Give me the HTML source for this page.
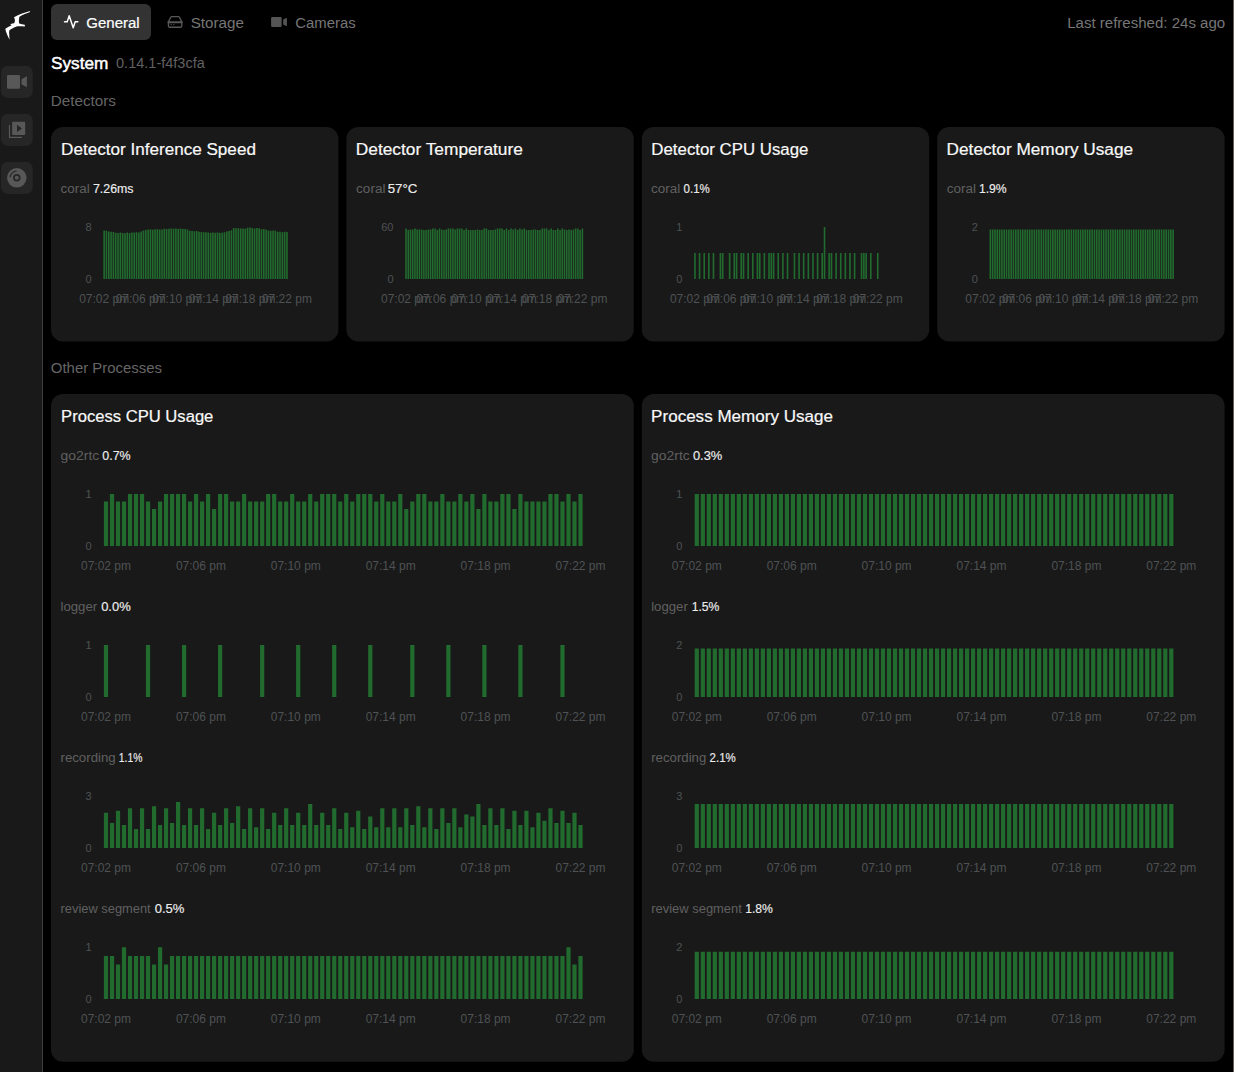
<!DOCTYPE html>
<html><head><meta charset="utf-8"><title>System</title>
<style>
html,body{margin:0;padding:0;background:#000;width:1234px;height:1072px;overflow:hidden}
svg{display:block;font-family:"Liberation Sans", sans-serif}
</style></head>
<body><svg width="1234" height="1072" viewBox="0 0 1234 1072">
<rect x="0" y="0" width="42" height="1072" fill="#191919"/>
<rect x="42" y="0" width="1" height="1072" fill="#3d3d3d"/>
<rect x="1233" y="0" width="1" height="1072" fill="#675e5a"/>
<path d="M9.6 39.8 C7.5 36 5.6 31.5 5.3 28.8 C7.5 27.2 9.8 26 11.6 25.2 L10.2 24.2 C11.8 23.6 13 23.4 14.2 23.2 C15 21.5 15.4 19.5 14 17.2 C19 14.5 25 12.4 30.2 11 L29.6 12.2 C26 13.5 22 15 19.4 16.8 C19 19 18.6 21.5 19.2 23.6 C21 24.2 23 24.4 24.8 24.8 L24.9 26.6 C21.5 26.4 19 26.2 16.6 26.4 C14 27.2 11.5 28.6 9.2 30.4 C9 33.5 9.4 36.5 9.6 39.8 Z" fill="#ffffff"/>
<rect x="1" y="65.8" width="31.8" height="32.2" rx="7" fill="#262626"/>
<rect x="1" y="113.8" width="31.8" height="32.2" rx="7" fill="#262626"/>
<rect x="1" y="161.8" width="31.8" height="32.2" rx="7" fill="#262626"/>
<rect x="7" y="74.9" width="13" height="13.9" rx="1.3" fill="#585858"/>
<path d="M21.5 79.3 L26.4 76.4 Q26.9 76.2 26.9 76.8 L26.9 86.8 Q26.9 87.4 26.4 87.1 L21.5 84.3 Z" fill="#585858"/>
<path d="M8.9 124.9 h1.2 v11.9 h11.9 v1.2 h-13.1 Z" fill="#585858"/>
<rect x="12.1" y="121.7" width="13.1" height="13.3" rx="1.2" fill="#585858"/>
<path d="M17 124.8 L22 128.4 L17 132 Z" fill="#262626"/>
<circle cx="16.8" cy="177.8" r="9.75" fill="#585858"/>
<circle cx="16.8" cy="177.8" r="2.9" fill="none" stroke="#262626" stroke-width="1.7"/>
<path d="M10.2 177.3 A 6.8 6.8 0 0 1 16.6 171" fill="none" stroke="#262626" stroke-width="1.2"/>
<rect x="51" y="4" width="100" height="36" rx="6" fill="#333333"/>
<g transform="translate(63.2,13.8) scale(0.6666666666666666)" fill="none" stroke="#ffffff" stroke-width="2.2" stroke-linecap="round" stroke-linejoin="round"><path d="M22 12h-4l-3 9L9 3l-3 9H2"/></g>
<text x="86.39" y="28.00" font-size="14" fill="#ffffff" font-weight="normal" textLength="53.29" lengthAdjust="spacingAndGlyphs" stroke="#ffffff" stroke-width="0.2">General</text>
<g transform="translate(167.1,13.9) scale(0.6666666666666666)" fill="none" stroke="#585858" stroke-width="2" stroke-linecap="round" stroke-linejoin="round"><line x1="22" x2="2" y1="12.4" y2="12.4" stroke-width="3"/><path d="M5.45 5.11 2 12v6a2 2 0 0 0 2 2h16a2 2 0 0 0 2-2v-6l-3.45-6.89A2 2 0 0 0 16.76 4H7.24a2 2 0 0 0-1.79 1.11z"/><line x1="6" x2="6.01" y1="16" y2="16"/><line x1="10" x2="10.01" y1="16" y2="16"/></g>
<text x="190.65" y="27.90" font-size="14" fill="#767676" font-weight="normal" textLength="53.22" lengthAdjust="spacingAndGlyphs">Storage</text>
<rect x="271.1" y="17.1" width="10.5" height="9.9" rx="1" fill="#555555"/>
<path d="M283.2 19.4 L286.4 17.9 Q286.9 17.7 286.9 18.3 L286.9 25.7 Q286.9 26.3 286.4 26.0 L283.2 24.6 Z" fill="#555555"/>
<text x="295.28" y="27.90" font-size="14" fill="#767676" font-weight="normal" textLength="60.32" lengthAdjust="spacingAndGlyphs">Cameras</text>
<text x="1067.21" y="27.90" font-size="14" fill="#767676" font-weight="normal" textLength="157.97" lengthAdjust="spacingAndGlyphs">Last refreshed: 24s ago</text>
<text x="51.08" y="68.80" font-size="16" fill="#ffffff" font-weight="normal" textLength="57.23" lengthAdjust="spacingAndGlyphs" stroke="#ffffff" stroke-width="0.45">System</text>
<text x="116.06" y="67.80" font-size="14" fill="#606060" font-weight="normal" textLength="88.76" lengthAdjust="spacingAndGlyphs">0.14.1-f4f3cfa</text>
<text x="50.69" y="105.80" font-size="14" fill="#666666" font-weight="normal" textLength="65.26" lengthAdjust="spacingAndGlyphs">Detectors</text>
<text x="50.84" y="372.70" font-size="14" fill="#666666" font-weight="normal" textLength="111.17" lengthAdjust="spacingAndGlyphs">Other Processes</text>
<rect x="51.00" y="127.00" width="287.40" height="214.60" rx="12" fill="#191919"/>
<text x="61.05" y="154.80" font-size="16" fill="#f8f8f8" font-weight="normal" textLength="194.86" lengthAdjust="spacingAndGlyphs" stroke="#f8f8f8" stroke-width="0.2">Detector Inference Speed</text>
<text x="60.56" y="192.90" font-size="12" fill="#606060" font-weight="normal" textLength="29.17" lengthAdjust="spacingAndGlyphs">coral</text>
<text x="92.92" y="192.90" font-size="12" fill="#ececec" font-weight="normal" textLength="40.64" lengthAdjust="spacingAndGlyphs" stroke="#ececec" stroke-width="0.15">7.26ms</text>
<path d="M103.35 230.62h1.62V279.00h-1.62Z M105.66 230.87h1.62V279.00h-1.62Z M107.97 231.51h1.62V279.00h-1.62Z M110.29 231.82h1.62V279.00h-1.62Z M112.60 232.10h1.62V279.00h-1.62Z M114.92 232.72h1.62V279.00h-1.62Z M117.23 232.93h1.62V279.00h-1.62Z M119.54 232.44h1.62V279.00h-1.62Z M121.86 233.08h1.62V279.00h-1.62Z M124.17 233.27h1.62V279.00h-1.62Z M126.48 232.60h1.62V279.00h-1.62Z M128.80 232.89h1.62V279.00h-1.62Z M131.11 232.46h1.62V279.00h-1.62Z M133.43 232.61h1.62V279.00h-1.62Z M135.74 232.34h1.62V279.00h-1.62Z M138.05 232.60h1.62V279.00h-1.62Z M140.37 231.50h1.62V279.00h-1.62Z M142.68 230.51h1.62V279.00h-1.62Z M144.99 229.99h1.62V279.00h-1.62Z M147.31 229.38h1.62V279.00h-1.62Z M149.62 229.37h1.62V279.00h-1.62Z M151.94 229.80h1.62V279.00h-1.62Z M154.25 229.19h1.62V279.00h-1.62Z M156.56 229.26h1.62V279.00h-1.62Z M158.88 229.43h1.62V279.00h-1.62Z M161.19 229.59h1.62V279.00h-1.62Z M163.50 228.84h1.62V279.00h-1.62Z M165.82 229.05h1.62V279.00h-1.62Z M168.13 228.76h1.62V279.00h-1.62Z M170.45 228.54h1.62V279.00h-1.62Z M172.76 228.63h1.62V279.00h-1.62Z M175.07 228.46h1.62V279.00h-1.62Z M177.39 228.88h1.62V279.00h-1.62Z M179.70 228.56h1.62V279.00h-1.62Z M182.01 229.01h1.62V279.00h-1.62Z M184.33 229.07h1.62V279.00h-1.62Z M186.64 229.57h1.62V279.00h-1.62Z M188.96 230.65h1.62V279.00h-1.62Z M191.27 231.05h1.62V279.00h-1.62Z M193.58 231.32h1.62V279.00h-1.62Z M195.90 231.05h1.62V279.00h-1.62Z M198.21 231.80h1.62V279.00h-1.62Z M200.52 231.98h1.62V279.00h-1.62Z M202.84 232.36h1.62V279.00h-1.62Z M205.15 232.29h1.62V279.00h-1.62Z M207.47 232.49h1.62V279.00h-1.62Z M209.78 232.63h1.62V279.00h-1.62Z M212.09 232.54h1.62V279.00h-1.62Z M214.41 232.65h1.62V279.00h-1.62Z M216.72 232.51h1.62V279.00h-1.62Z M219.03 232.80h1.62V279.00h-1.62Z M221.35 232.72h1.62V279.00h-1.62Z M223.66 232.30h1.62V279.00h-1.62Z M225.98 231.48h1.62V279.00h-1.62Z M228.29 231.01h1.62V279.00h-1.62Z M230.60 230.27h1.62V279.00h-1.62Z M232.92 228.12h1.62V279.00h-1.62Z M235.23 228.13h1.62V279.00h-1.62Z M237.54 228.26h1.62V279.00h-1.62Z M239.86 228.61h1.62V279.00h-1.62Z M242.17 228.58h1.62V279.00h-1.62Z M244.49 228.81h1.62V279.00h-1.62Z M246.80 227.82h1.62V279.00h-1.62Z M249.11 227.54h1.62V279.00h-1.62Z M251.43 228.00h1.62V279.00h-1.62Z M253.74 228.41h1.62V279.00h-1.62Z M256.05 228.01h1.62V279.00h-1.62Z M258.37 228.21h1.62V279.00h-1.62Z M260.68 229.32h1.62V279.00h-1.62Z M263.00 229.12h1.62V279.00h-1.62Z M265.31 229.82h1.62V279.00h-1.62Z M267.62 230.40h1.62V279.00h-1.62Z M269.94 230.64h1.62V279.00h-1.62Z M272.25 230.60h1.62V279.00h-1.62Z M274.56 230.85h1.62V279.00h-1.62Z M276.88 231.85h1.62V279.00h-1.62Z M279.19 231.63h1.62V279.00h-1.62Z M281.51 232.14h1.62V279.00h-1.62Z M283.82 231.65h1.62V279.00h-1.62Z M286.13 232.01h1.62V279.00h-1.62Z" fill="#216b2e"/>
<text x="91.60" y="231.10" font-size="11" fill="#4e5254" text-anchor="end">8</text>
<text x="91.60" y="282.90" font-size="11" fill="#4e5254" text-anchor="end">0</text>
<text x="104.16" y="302.80" font-size="12" fill="#4e5254" text-anchor="middle">07:02 pm</text>
<text x="140.71" y="302.80" font-size="12" fill="#4e5254" text-anchor="middle">07:06 pm</text>
<text x="177.27" y="302.80" font-size="12" fill="#4e5254" text-anchor="middle">07:10 pm</text>
<text x="213.83" y="302.80" font-size="12" fill="#4e5254" text-anchor="middle">07:14 pm</text>
<text x="250.39" y="302.80" font-size="12" fill="#4e5254" text-anchor="middle">07:18 pm</text>
<text x="286.94" y="302.80" font-size="12" fill="#4e5254" text-anchor="middle">07:22 pm</text>
<rect x="346.40" y="127.00" width="287.40" height="214.60" rx="12" fill="#191919"/>
<text x="355.83" y="154.80" font-size="16" fill="#f8f8f8" font-weight="normal" textLength="166.99" lengthAdjust="spacingAndGlyphs" stroke="#f8f8f8" stroke-width="0.2">Detector Temperature</text>
<text x="356.12" y="192.90" font-size="12" fill="#606060" font-weight="normal" textLength="29.29" lengthAdjust="spacingAndGlyphs">coral</text>
<text x="387.70" y="192.90" font-size="12" fill="#ececec" font-weight="normal" textLength="29.61" lengthAdjust="spacingAndGlyphs" stroke="#ececec" stroke-width="0.15">57°C</text>
<path d="M405.23 228.60h1.56V279.00h-1.56Z M407.47 230.10h1.56V279.00h-1.56Z M409.70 229.50h1.56V279.00h-1.56Z M411.93 229.50h1.56V279.00h-1.56Z M414.16 228.60h1.56V279.00h-1.56Z M416.40 229.50h1.56V279.00h-1.56Z M418.63 229.50h1.56V279.00h-1.56Z M420.86 229.50h1.56V279.00h-1.56Z M423.09 230.10h1.56V279.00h-1.56Z M425.33 230.10h1.56V279.00h-1.56Z M427.56 229.50h1.56V279.00h-1.56Z M429.79 229.50h1.56V279.00h-1.56Z M432.02 228.60h1.56V279.00h-1.56Z M434.26 228.60h1.56V279.00h-1.56Z M436.49 230.10h1.56V279.00h-1.56Z M438.72 228.60h1.56V279.00h-1.56Z M440.95 229.50h1.56V279.00h-1.56Z M443.19 230.10h1.56V279.00h-1.56Z M445.42 229.50h1.56V279.00h-1.56Z M447.65 228.60h1.56V279.00h-1.56Z M449.88 228.60h1.56V279.00h-1.56Z M452.12 228.60h1.56V279.00h-1.56Z M454.35 229.50h1.56V279.00h-1.56Z M456.58 228.60h1.56V279.00h-1.56Z M458.81 228.60h1.56V279.00h-1.56Z M461.05 228.60h1.56V279.00h-1.56Z M463.28 230.10h1.56V279.00h-1.56Z M465.51 228.60h1.56V279.00h-1.56Z M467.74 230.10h1.56V279.00h-1.56Z M469.98 230.10h1.56V279.00h-1.56Z M472.21 230.10h1.56V279.00h-1.56Z M474.44 230.10h1.56V279.00h-1.56Z M476.67 229.50h1.56V279.00h-1.56Z M478.91 230.10h1.56V279.00h-1.56Z M481.14 230.10h1.56V279.00h-1.56Z M483.37 228.60h1.56V279.00h-1.56Z M485.60 228.60h1.56V279.00h-1.56Z M487.84 230.10h1.56V279.00h-1.56Z M490.07 230.10h1.56V279.00h-1.56Z M492.30 230.10h1.56V279.00h-1.56Z M494.53 229.50h1.56V279.00h-1.56Z M496.77 228.60h1.56V279.00h-1.56Z M499.00 228.60h1.56V279.00h-1.56Z M501.23 228.60h1.56V279.00h-1.56Z M503.46 230.10h1.56V279.00h-1.56Z M505.70 228.60h1.56V279.00h-1.56Z M507.93 230.10h1.56V279.00h-1.56Z M510.16 228.60h1.56V279.00h-1.56Z M512.39 229.50h1.56V279.00h-1.56Z M514.63 228.60h1.56V279.00h-1.56Z M516.86 230.10h1.56V279.00h-1.56Z M519.09 228.60h1.56V279.00h-1.56Z M521.32 229.50h1.56V279.00h-1.56Z M523.56 228.60h1.56V279.00h-1.56Z M525.79 230.10h1.56V279.00h-1.56Z M528.02 230.10h1.56V279.00h-1.56Z M530.25 230.10h1.56V279.00h-1.56Z M532.49 229.50h1.56V279.00h-1.56Z M534.72 229.50h1.56V279.00h-1.56Z M536.95 230.10h1.56V279.00h-1.56Z M539.18 230.10h1.56V279.00h-1.56Z M541.42 228.60h1.56V279.00h-1.56Z M543.65 228.60h1.56V279.00h-1.56Z M545.88 228.60h1.56V279.00h-1.56Z M548.11 230.10h1.56V279.00h-1.56Z M550.35 228.60h1.56V279.00h-1.56Z M552.58 230.10h1.56V279.00h-1.56Z M554.81 230.10h1.56V279.00h-1.56Z M557.04 228.60h1.56V279.00h-1.56Z M559.28 230.10h1.56V279.00h-1.56Z M561.51 228.60h1.56V279.00h-1.56Z M563.74 229.50h1.56V279.00h-1.56Z M565.97 230.10h1.56V279.00h-1.56Z M568.21 229.50h1.56V279.00h-1.56Z M570.44 230.10h1.56V279.00h-1.56Z M572.67 229.50h1.56V279.00h-1.56Z M574.90 228.60h1.56V279.00h-1.56Z M577.14 228.60h1.56V279.00h-1.56Z M579.37 230.10h1.56V279.00h-1.56Z M581.60 228.60h1.56V279.00h-1.56Z" fill="#216b2e"/>
<text x="393.50" y="231.10" font-size="11" fill="#4e5254" text-anchor="end">60</text>
<text x="393.50" y="282.90" font-size="11" fill="#4e5254" text-anchor="end">0</text>
<text x="406.02" y="302.80" font-size="12" fill="#4e5254" text-anchor="middle">07:02 pm</text>
<text x="441.29" y="302.80" font-size="12" fill="#4e5254" text-anchor="middle">07:06 pm</text>
<text x="476.56" y="302.80" font-size="12" fill="#4e5254" text-anchor="middle">07:10 pm</text>
<text x="511.84" y="302.80" font-size="12" fill="#4e5254" text-anchor="middle">07:14 pm</text>
<text x="547.11" y="302.80" font-size="12" fill="#4e5254" text-anchor="middle">07:18 pm</text>
<text x="582.38" y="302.80" font-size="12" fill="#4e5254" text-anchor="middle">07:22 pm</text>
<rect x="641.80" y="127.00" width="287.40" height="214.60" rx="12" fill="#191919"/>
<text x="651.36" y="154.80" font-size="16" fill="#f8f8f8" font-weight="normal" textLength="156.99" lengthAdjust="spacingAndGlyphs" stroke="#f8f8f8" stroke-width="0.2">Detector CPU Usage</text>
<text x="651.14" y="192.90" font-size="12" fill="#606060" font-weight="normal" textLength="29.17" lengthAdjust="spacingAndGlyphs">coral</text>
<text x="683.57" y="192.90" font-size="12" fill="#ececec" font-weight="normal" textLength="26.23" lengthAdjust="spacingAndGlyphs" stroke="#ececec" stroke-width="0.15">0.1%</text>
<path d="M694.15 253.00h1.62V279.00h-1.62Z M698.77 253.00h1.62V279.00h-1.62Z M703.40 253.00h1.62V279.00h-1.62Z M708.03 253.00h1.62V279.00h-1.62Z M712.66 253.00h1.62V279.00h-1.62Z M719.60 253.00h1.62V279.00h-1.62Z M721.91 253.00h1.62V279.00h-1.62Z M728.85 253.00h1.62V279.00h-1.62Z M733.48 253.00h1.62V279.00h-1.62Z M735.79 253.00h1.62V279.00h-1.62Z M740.42 253.00h1.62V279.00h-1.62Z M742.74 253.00h1.62V279.00h-1.62Z M747.36 253.00h1.62V279.00h-1.62Z M751.99 253.00h1.62V279.00h-1.62Z M756.62 253.00h1.62V279.00h-1.62Z M758.93 253.00h1.62V279.00h-1.62Z M763.56 253.00h1.62V279.00h-1.62Z M768.19 253.00h1.62V279.00h-1.62Z M770.50 253.00h1.62V279.00h-1.62Z M772.81 253.00h1.62V279.00h-1.62Z M777.44 253.00h1.62V279.00h-1.62Z M782.07 253.00h1.62V279.00h-1.62Z M786.70 253.00h1.62V279.00h-1.62Z M793.64 253.00h1.62V279.00h-1.62Z M798.27 253.00h1.62V279.00h-1.62Z M802.89 253.00h1.62V279.00h-1.62Z M807.52 253.00h1.62V279.00h-1.62Z M812.15 253.00h1.62V279.00h-1.62Z M816.78 253.00h1.62V279.00h-1.62Z M821.40 253.00h1.62V279.00h-1.62Z M823.72 227.00h1.62V279.00h-1.62Z M828.34 253.00h1.62V279.00h-1.62Z M830.66 253.00h1.62V279.00h-1.62Z M835.29 253.00h1.62V279.00h-1.62Z M839.91 253.00h1.62V279.00h-1.62Z M844.54 253.00h1.62V279.00h-1.62Z M849.17 253.00h1.62V279.00h-1.62Z M853.80 253.00h1.62V279.00h-1.62Z M860.74 253.00h1.62V279.00h-1.62Z M863.05 253.00h1.62V279.00h-1.62Z M865.36 253.00h1.62V279.00h-1.62Z M869.99 253.00h1.62V279.00h-1.62Z M876.93 253.00h1.62V279.00h-1.62Z" fill="#216b2e"/>
<text x="682.40" y="231.10" font-size="11" fill="#4e5254" text-anchor="end">1</text>
<text x="682.40" y="282.90" font-size="11" fill="#4e5254" text-anchor="end">0</text>
<text x="694.96" y="302.80" font-size="12" fill="#4e5254" text-anchor="middle">07:02 pm</text>
<text x="731.51" y="302.80" font-size="12" fill="#4e5254" text-anchor="middle">07:06 pm</text>
<text x="768.07" y="302.80" font-size="12" fill="#4e5254" text-anchor="middle">07:10 pm</text>
<text x="804.63" y="302.80" font-size="12" fill="#4e5254" text-anchor="middle">07:14 pm</text>
<text x="841.19" y="302.80" font-size="12" fill="#4e5254" text-anchor="middle">07:18 pm</text>
<text x="877.74" y="302.80" font-size="12" fill="#4e5254" text-anchor="middle">07:22 pm</text>
<rect x="937.20" y="127.00" width="287.40" height="214.60" rx="12" fill="#191919"/>
<text x="946.63" y="154.80" font-size="16" fill="#f8f8f8" font-weight="normal" textLength="186.45" lengthAdjust="spacingAndGlyphs" stroke="#f8f8f8" stroke-width="0.2">Detector Memory Usage</text>
<text x="946.89" y="192.90" font-size="12" fill="#606060" font-weight="normal" textLength="29.11" lengthAdjust="spacingAndGlyphs">coral</text>
<text x="978.90" y="192.90" font-size="12" fill="#ececec" font-weight="normal" textLength="27.77" lengthAdjust="spacingAndGlyphs" stroke="#ececec" stroke-width="0.15">1.9%</text>
<path d="M989.55 229.50h1.62V279.00h-1.62Z M991.86 229.50h1.62V279.00h-1.62Z M994.17 229.50h1.62V279.00h-1.62Z M996.49 229.50h1.62V279.00h-1.62Z M998.80 229.50h1.62V279.00h-1.62Z M1001.12 229.50h1.62V279.00h-1.62Z M1003.43 229.50h1.62V279.00h-1.62Z M1005.74 229.50h1.62V279.00h-1.62Z M1008.06 229.50h1.62V279.00h-1.62Z M1010.37 229.50h1.62V279.00h-1.62Z M1012.68 229.50h1.62V279.00h-1.62Z M1015.00 229.50h1.62V279.00h-1.62Z M1017.31 229.50h1.62V279.00h-1.62Z M1019.63 229.50h1.62V279.00h-1.62Z M1021.94 229.50h1.62V279.00h-1.62Z M1024.25 229.50h1.62V279.00h-1.62Z M1026.57 229.50h1.62V279.00h-1.62Z M1028.88 229.50h1.62V279.00h-1.62Z M1031.19 229.50h1.62V279.00h-1.62Z M1033.51 229.50h1.62V279.00h-1.62Z M1035.82 229.50h1.62V279.00h-1.62Z M1038.14 229.50h1.62V279.00h-1.62Z M1040.45 229.50h1.62V279.00h-1.62Z M1042.76 229.50h1.62V279.00h-1.62Z M1045.08 229.50h1.62V279.00h-1.62Z M1047.39 229.50h1.62V279.00h-1.62Z M1049.70 229.50h1.62V279.00h-1.62Z M1052.02 229.50h1.62V279.00h-1.62Z M1054.33 229.50h1.62V279.00h-1.62Z M1056.65 229.50h1.62V279.00h-1.62Z M1058.96 229.50h1.62V279.00h-1.62Z M1061.27 229.50h1.62V279.00h-1.62Z M1063.59 229.50h1.62V279.00h-1.62Z M1065.90 229.50h1.62V279.00h-1.62Z M1068.21 229.50h1.62V279.00h-1.62Z M1070.53 229.50h1.62V279.00h-1.62Z M1072.84 229.50h1.62V279.00h-1.62Z M1075.16 229.50h1.62V279.00h-1.62Z M1077.47 229.50h1.62V279.00h-1.62Z M1079.78 229.50h1.62V279.00h-1.62Z M1082.10 229.50h1.62V279.00h-1.62Z M1084.41 229.50h1.62V279.00h-1.62Z M1086.72 229.50h1.62V279.00h-1.62Z M1089.04 229.50h1.62V279.00h-1.62Z M1091.35 229.50h1.62V279.00h-1.62Z M1093.67 229.50h1.62V279.00h-1.62Z M1095.98 229.50h1.62V279.00h-1.62Z M1098.29 229.50h1.62V279.00h-1.62Z M1100.61 229.50h1.62V279.00h-1.62Z M1102.92 229.50h1.62V279.00h-1.62Z M1105.23 229.50h1.62V279.00h-1.62Z M1107.55 229.50h1.62V279.00h-1.62Z M1109.86 229.50h1.62V279.00h-1.62Z M1112.18 229.50h1.62V279.00h-1.62Z M1114.49 229.50h1.62V279.00h-1.62Z M1116.80 229.50h1.62V279.00h-1.62Z M1119.12 229.50h1.62V279.00h-1.62Z M1121.43 229.50h1.62V279.00h-1.62Z M1123.74 229.50h1.62V279.00h-1.62Z M1126.06 229.50h1.62V279.00h-1.62Z M1128.37 229.50h1.62V279.00h-1.62Z M1130.69 229.50h1.62V279.00h-1.62Z M1133.00 229.50h1.62V279.00h-1.62Z M1135.31 229.50h1.62V279.00h-1.62Z M1137.63 229.50h1.62V279.00h-1.62Z M1139.94 229.50h1.62V279.00h-1.62Z M1142.25 229.50h1.62V279.00h-1.62Z M1144.57 229.50h1.62V279.00h-1.62Z M1146.88 229.50h1.62V279.00h-1.62Z M1149.20 229.50h1.62V279.00h-1.62Z M1151.51 229.50h1.62V279.00h-1.62Z M1153.82 229.50h1.62V279.00h-1.62Z M1156.14 229.50h1.62V279.00h-1.62Z M1158.45 229.50h1.62V279.00h-1.62Z M1160.76 229.50h1.62V279.00h-1.62Z M1163.08 229.50h1.62V279.00h-1.62Z M1165.39 229.50h1.62V279.00h-1.62Z M1167.71 229.50h1.62V279.00h-1.62Z M1170.02 229.50h1.62V279.00h-1.62Z M1172.33 229.50h1.62V279.00h-1.62Z" fill="#216b2e"/>
<text x="977.80" y="231.10" font-size="11" fill="#4e5254" text-anchor="end">2</text>
<text x="977.80" y="282.90" font-size="11" fill="#4e5254" text-anchor="end">0</text>
<text x="990.36" y="302.80" font-size="12" fill="#4e5254" text-anchor="middle">07:02 pm</text>
<text x="1026.91" y="302.80" font-size="12" fill="#4e5254" text-anchor="middle">07:06 pm</text>
<text x="1063.47" y="302.80" font-size="12" fill="#4e5254" text-anchor="middle">07:10 pm</text>
<text x="1100.03" y="302.80" font-size="12" fill="#4e5254" text-anchor="middle">07:14 pm</text>
<text x="1136.59" y="302.80" font-size="12" fill="#4e5254" text-anchor="middle">07:18 pm</text>
<text x="1173.14" y="302.80" font-size="12" fill="#4e5254" text-anchor="middle">07:22 pm</text>
<rect x="51.00" y="394.00" width="582.80" height="667.70" rx="12" fill="#191919"/>
<text x="61.08" y="422.00" font-size="16" fill="#f8f8f8" font-weight="normal" textLength="152.27" lengthAdjust="spacingAndGlyphs" stroke="#f8f8f8" stroke-width="0.2">Process CPU Usage</text>
<text x="60.54" y="459.90" font-size="12" fill="#606060" font-weight="normal" textLength="38.68" lengthAdjust="spacingAndGlyphs">go2rtc</text>
<text x="102.37" y="459.90" font-size="12" fill="#ececec" font-weight="normal" textLength="28.31" lengthAdjust="spacingAndGlyphs" stroke="#ececec" stroke-width="0.15">0.7%</text>
<path d="M103.90 501.50h4.20V546.00h-4.20Z M109.91 494.00h4.20V546.00h-4.20Z M115.91 501.50h4.20V546.00h-4.20Z M121.92 501.50h4.20V546.00h-4.20Z M127.93 494.00h4.20V546.00h-4.20Z M133.93 494.00h4.20V546.00h-4.20Z M139.94 494.00h4.20V546.00h-4.20Z M145.94 501.50h4.20V546.00h-4.20Z M151.95 508.90h4.20V546.00h-4.20Z M157.96 501.50h4.20V546.00h-4.20Z M163.96 494.00h4.20V546.00h-4.20Z M169.97 494.00h4.20V546.00h-4.20Z M175.98 494.00h4.20V546.00h-4.20Z M181.98 494.00h4.20V546.00h-4.20Z M187.99 501.50h4.20V546.00h-4.20Z M193.99 494.00h4.20V546.00h-4.20Z M200.00 501.50h4.20V546.00h-4.20Z M206.01 494.00h4.20V546.00h-4.20Z M212.01 508.90h4.20V546.00h-4.20Z M218.02 494.00h4.20V546.00h-4.20Z M224.03 494.00h4.20V546.00h-4.20Z M230.03 501.50h4.20V546.00h-4.20Z M236.04 501.50h4.20V546.00h-4.20Z M242.04 494.00h4.20V546.00h-4.20Z M248.05 501.50h4.20V546.00h-4.20Z M254.06 501.50h4.20V546.00h-4.20Z M260.06 501.50h4.20V546.00h-4.20Z M266.07 494.00h4.20V546.00h-4.20Z M272.08 494.00h4.20V546.00h-4.20Z M278.08 501.50h4.20V546.00h-4.20Z M284.09 501.50h4.20V546.00h-4.20Z M290.09 494.00h4.20V546.00h-4.20Z M296.10 501.50h4.20V546.00h-4.20Z M302.11 501.50h4.20V546.00h-4.20Z M308.11 494.00h4.20V546.00h-4.20Z M314.12 501.50h4.20V546.00h-4.20Z M320.13 494.00h4.20V546.00h-4.20Z M326.13 494.00h4.20V546.00h-4.20Z M332.14 494.00h4.20V546.00h-4.20Z M338.14 501.50h4.20V546.00h-4.20Z M344.15 494.00h4.20V546.00h-4.20Z M350.16 501.50h4.20V546.00h-4.20Z M356.16 494.00h4.20V546.00h-4.20Z M362.17 494.00h4.20V546.00h-4.20Z M368.18 494.00h4.20V546.00h-4.20Z M374.18 501.50h4.20V546.00h-4.20Z M380.19 494.00h4.20V546.00h-4.20Z M386.19 501.50h4.20V546.00h-4.20Z M392.20 501.50h4.20V546.00h-4.20Z M398.21 494.00h4.20V546.00h-4.20Z M404.21 508.90h4.20V546.00h-4.20Z M410.22 501.50h4.20V546.00h-4.20Z M416.23 494.00h4.20V546.00h-4.20Z M422.23 494.00h4.20V546.00h-4.20Z M428.24 501.50h4.20V546.00h-4.20Z M434.24 501.50h4.20V546.00h-4.20Z M440.25 494.00h4.20V546.00h-4.20Z M446.26 501.50h4.20V546.00h-4.20Z M452.26 501.50h4.20V546.00h-4.20Z M458.27 494.00h4.20V546.00h-4.20Z M464.28 501.50h4.20V546.00h-4.20Z M470.28 494.00h4.20V546.00h-4.20Z M476.29 508.90h4.20V546.00h-4.20Z M482.29 494.00h4.20V546.00h-4.20Z M488.30 501.50h4.20V546.00h-4.20Z M494.31 501.50h4.20V546.00h-4.20Z M500.31 494.00h4.20V546.00h-4.20Z M506.32 494.00h4.20V546.00h-4.20Z M512.33 508.90h4.20V546.00h-4.20Z M518.33 494.00h4.20V546.00h-4.20Z M524.34 501.50h4.20V546.00h-4.20Z M530.34 501.50h4.20V546.00h-4.20Z M536.35 501.50h4.20V546.00h-4.20Z M542.36 501.50h4.20V546.00h-4.20Z M548.36 494.00h4.20V546.00h-4.20Z M554.37 494.00h4.20V546.00h-4.20Z M560.38 501.50h4.20V546.00h-4.20Z M566.38 494.00h4.20V546.00h-4.20Z M572.39 501.50h4.20V546.00h-4.20Z M578.39 494.00h4.20V546.00h-4.20Z" fill="#216b2e"/>
<text x="91.60" y="498.10" font-size="11" fill="#4e5254" text-anchor="end">1</text>
<text x="91.60" y="549.90" font-size="11" fill="#4e5254" text-anchor="end">0</text>
<text x="106.00" y="569.80" font-size="12" fill="#4e5254" text-anchor="middle">07:02 pm</text>
<text x="200.90" y="569.80" font-size="12" fill="#4e5254" text-anchor="middle">07:06 pm</text>
<text x="295.80" y="569.80" font-size="12" fill="#4e5254" text-anchor="middle">07:10 pm</text>
<text x="390.70" y="569.80" font-size="12" fill="#4e5254" text-anchor="middle">07:14 pm</text>
<text x="485.60" y="569.80" font-size="12" fill="#4e5254" text-anchor="middle">07:18 pm</text>
<text x="580.50" y="569.80" font-size="12" fill="#4e5254" text-anchor="middle">07:22 pm</text>
<text x="60.46" y="610.90" font-size="12" fill="#606060" font-weight="normal" textLength="36.78" lengthAdjust="spacingAndGlyphs">logger</text>
<text x="101.16" y="610.90" font-size="12" fill="#ececec" font-weight="normal" textLength="29.54" lengthAdjust="spacingAndGlyphs" stroke="#ececec" stroke-width="0.15">0.0%</text>
<path d="M103.90 645.00h4.20V697.00h-4.20Z M145.94 645.00h4.20V697.00h-4.20Z M181.98 645.00h4.20V697.00h-4.20Z M218.02 645.00h4.20V697.00h-4.20Z M260.06 645.00h4.20V697.00h-4.20Z M296.10 645.00h4.20V697.00h-4.20Z M332.14 645.00h4.20V697.00h-4.20Z M368.18 645.00h4.20V697.00h-4.20Z M410.22 645.00h4.20V697.00h-4.20Z M446.26 645.00h4.20V697.00h-4.20Z M482.29 645.00h4.20V697.00h-4.20Z M518.33 645.00h4.20V697.00h-4.20Z M560.38 645.00h4.20V697.00h-4.20Z" fill="#216b2e"/>
<text x="91.60" y="649.10" font-size="11" fill="#4e5254" text-anchor="end">1</text>
<text x="91.60" y="700.90" font-size="11" fill="#4e5254" text-anchor="end">0</text>
<text x="106.00" y="720.80" font-size="12" fill="#4e5254" text-anchor="middle">07:02 pm</text>
<text x="200.90" y="720.80" font-size="12" fill="#4e5254" text-anchor="middle">07:06 pm</text>
<text x="295.80" y="720.80" font-size="12" fill="#4e5254" text-anchor="middle">07:10 pm</text>
<text x="390.70" y="720.80" font-size="12" fill="#4e5254" text-anchor="middle">07:14 pm</text>
<text x="485.60" y="720.80" font-size="12" fill="#4e5254" text-anchor="middle">07:18 pm</text>
<text x="580.50" y="720.80" font-size="12" fill="#4e5254" text-anchor="middle">07:22 pm</text>
<text x="60.47" y="761.90" font-size="12" fill="#606060" font-weight="normal" textLength="55.23" lengthAdjust="spacingAndGlyphs">recording</text>
<text x="118.77" y="761.90" font-size="12" fill="#ececec" font-weight="normal" textLength="23.57" lengthAdjust="spacingAndGlyphs" stroke="#ececec" stroke-width="0.15">1.1%</text>
<path d="M103.90 812.70h4.20V848.00h-4.20Z M109.91 823.00h4.20V848.00h-4.20Z M115.91 810.70h4.20V848.00h-4.20Z M121.92 825.00h4.20V848.00h-4.20Z M127.93 808.30h4.20V848.00h-4.20Z M133.93 829.10h4.20V848.00h-4.20Z M139.94 808.30h4.20V848.00h-4.20Z M145.94 829.10h4.20V848.00h-4.20Z M151.95 806.30h4.20V848.00h-4.20Z M157.96 825.00h4.20V848.00h-4.20Z M163.96 808.30h4.20V848.00h-4.20Z M169.97 823.00h4.20V848.00h-4.20Z M175.98 802.10h4.20V848.00h-4.20Z M181.98 825.00h4.20V848.00h-4.20Z M187.99 808.30h4.20V848.00h-4.20Z M193.99 825.00h4.20V848.00h-4.20Z M200.00 808.30h4.20V848.00h-4.20Z M206.01 829.10h4.20V848.00h-4.20Z M212.01 812.70h4.20V848.00h-4.20Z M218.02 825.00h4.20V848.00h-4.20Z M224.03 808.30h4.20V848.00h-4.20Z M230.03 823.00h4.20V848.00h-4.20Z M236.04 806.30h4.20V848.00h-4.20Z M242.04 829.10h4.20V848.00h-4.20Z M248.05 808.30h4.20V848.00h-4.20Z M254.06 827.20h4.20V848.00h-4.20Z M260.06 808.30h4.20V848.00h-4.20Z M266.07 829.10h4.20V848.00h-4.20Z M272.08 812.70h4.20V848.00h-4.20Z M278.08 825.00h4.20V848.00h-4.20Z M284.09 808.30h4.20V848.00h-4.20Z M290.09 825.00h4.20V848.00h-4.20Z M296.10 812.70h4.20V848.00h-4.20Z M302.11 825.00h4.20V848.00h-4.20Z M308.11 804.10h4.20V848.00h-4.20Z M314.12 825.00h4.20V848.00h-4.20Z M320.13 812.70h4.20V848.00h-4.20Z M326.13 825.00h4.20V848.00h-4.20Z M332.14 808.30h4.20V848.00h-4.20Z M338.14 829.10h4.20V848.00h-4.20Z M344.15 812.70h4.20V848.00h-4.20Z M350.16 827.20h4.20V848.00h-4.20Z M356.16 810.70h4.20V848.00h-4.20Z M362.17 829.10h4.20V848.00h-4.20Z M368.18 816.60h4.20V848.00h-4.20Z M374.18 827.20h4.20V848.00h-4.20Z M380.19 808.30h4.20V848.00h-4.20Z M386.19 827.20h4.20V848.00h-4.20Z M392.20 808.30h4.20V848.00h-4.20Z M398.21 827.20h4.20V848.00h-4.20Z M404.21 808.30h4.20V848.00h-4.20Z M410.22 825.00h4.20V848.00h-4.20Z M416.23 806.30h4.20V848.00h-4.20Z M422.23 827.20h4.20V848.00h-4.20Z M428.24 808.30h4.20V848.00h-4.20Z M434.24 829.10h4.20V848.00h-4.20Z M440.25 808.30h4.20V848.00h-4.20Z M446.26 823.00h4.20V848.00h-4.20Z M452.26 808.30h4.20V848.00h-4.20Z M458.27 827.20h4.20V848.00h-4.20Z M464.28 814.60h4.20V848.00h-4.20Z M470.28 816.60h4.20V848.00h-4.20Z M476.29 804.10h4.20V848.00h-4.20Z M482.29 825.00h4.20V848.00h-4.20Z M488.30 808.30h4.20V848.00h-4.20Z M494.31 825.00h4.20V848.00h-4.20Z M500.31 808.30h4.20V848.00h-4.20Z M506.32 829.10h4.20V848.00h-4.20Z M512.33 810.70h4.20V848.00h-4.20Z M518.33 825.00h4.20V848.00h-4.20Z M524.34 810.70h4.20V848.00h-4.20Z M530.34 827.20h4.20V848.00h-4.20Z M536.35 812.70h4.20V848.00h-4.20Z M542.36 820.80h4.20V848.00h-4.20Z M548.36 808.30h4.20V848.00h-4.20Z M554.37 823.00h4.20V848.00h-4.20Z M560.38 810.70h4.20V848.00h-4.20Z M566.38 823.00h4.20V848.00h-4.20Z M572.39 812.70h4.20V848.00h-4.20Z M578.39 825.00h4.20V848.00h-4.20Z" fill="#216b2e"/>
<text x="91.60" y="800.10" font-size="11" fill="#4e5254" text-anchor="end">3</text>
<text x="91.60" y="851.90" font-size="11" fill="#4e5254" text-anchor="end">0</text>
<text x="106.00" y="871.80" font-size="12" fill="#4e5254" text-anchor="middle">07:02 pm</text>
<text x="200.90" y="871.80" font-size="12" fill="#4e5254" text-anchor="middle">07:06 pm</text>
<text x="295.80" y="871.80" font-size="12" fill="#4e5254" text-anchor="middle">07:10 pm</text>
<text x="390.70" y="871.80" font-size="12" fill="#4e5254" text-anchor="middle">07:14 pm</text>
<text x="485.60" y="871.80" font-size="12" fill="#4e5254" text-anchor="middle">07:18 pm</text>
<text x="580.50" y="871.80" font-size="12" fill="#4e5254" text-anchor="middle">07:22 pm</text>
<text x="60.50" y="912.90" font-size="12" fill="#606060" font-weight="normal" textLength="90.20" lengthAdjust="spacingAndGlyphs">review segment</text>
<text x="154.66" y="912.90" font-size="12" fill="#ececec" font-weight="normal" textLength="29.70" lengthAdjust="spacingAndGlyphs" stroke="#ececec" stroke-width="0.15">0.5%</text>
<path d="M103.90 955.90h4.20V999.00h-4.20Z M109.91 955.90h4.20V999.00h-4.20Z M115.91 964.50h4.20V999.00h-4.20Z M121.92 947.20h4.20V999.00h-4.20Z M127.93 955.90h4.20V999.00h-4.20Z M133.93 955.90h4.20V999.00h-4.20Z M139.94 955.90h4.20V999.00h-4.20Z M145.94 955.90h4.20V999.00h-4.20Z M151.95 964.50h4.20V999.00h-4.20Z M157.96 947.20h4.20V999.00h-4.20Z M163.96 964.50h4.20V999.00h-4.20Z M169.97 955.90h4.20V999.00h-4.20Z M175.98 955.90h4.20V999.00h-4.20Z M181.98 955.90h4.20V999.00h-4.20Z M187.99 955.90h4.20V999.00h-4.20Z M193.99 955.90h4.20V999.00h-4.20Z M200.00 955.90h4.20V999.00h-4.20Z M206.01 955.90h4.20V999.00h-4.20Z M212.01 955.90h4.20V999.00h-4.20Z M218.02 955.90h4.20V999.00h-4.20Z M224.03 955.90h4.20V999.00h-4.20Z M230.03 955.90h4.20V999.00h-4.20Z M236.04 955.90h4.20V999.00h-4.20Z M242.04 955.90h4.20V999.00h-4.20Z M248.05 955.90h4.20V999.00h-4.20Z M254.06 955.90h4.20V999.00h-4.20Z M260.06 955.90h4.20V999.00h-4.20Z M266.07 955.90h4.20V999.00h-4.20Z M272.08 955.90h4.20V999.00h-4.20Z M278.08 955.90h4.20V999.00h-4.20Z M284.09 955.90h4.20V999.00h-4.20Z M290.09 955.90h4.20V999.00h-4.20Z M296.10 955.90h4.20V999.00h-4.20Z M302.11 955.90h4.20V999.00h-4.20Z M308.11 955.90h4.20V999.00h-4.20Z M314.12 955.90h4.20V999.00h-4.20Z M320.13 955.90h4.20V999.00h-4.20Z M326.13 955.90h4.20V999.00h-4.20Z M332.14 955.90h4.20V999.00h-4.20Z M338.14 955.90h4.20V999.00h-4.20Z M344.15 955.90h4.20V999.00h-4.20Z M350.16 955.90h4.20V999.00h-4.20Z M356.16 955.90h4.20V999.00h-4.20Z M362.17 955.90h4.20V999.00h-4.20Z M368.18 955.90h4.20V999.00h-4.20Z M374.18 955.90h4.20V999.00h-4.20Z M380.19 955.90h4.20V999.00h-4.20Z M386.19 955.90h4.20V999.00h-4.20Z M392.20 955.90h4.20V999.00h-4.20Z M398.21 955.90h4.20V999.00h-4.20Z M404.21 955.90h4.20V999.00h-4.20Z M410.22 955.90h4.20V999.00h-4.20Z M416.23 955.90h4.20V999.00h-4.20Z M422.23 955.90h4.20V999.00h-4.20Z M428.24 955.90h4.20V999.00h-4.20Z M434.24 955.90h4.20V999.00h-4.20Z M440.25 955.90h4.20V999.00h-4.20Z M446.26 955.90h4.20V999.00h-4.20Z M452.26 955.90h4.20V999.00h-4.20Z M458.27 955.90h4.20V999.00h-4.20Z M464.28 955.90h4.20V999.00h-4.20Z M470.28 955.90h4.20V999.00h-4.20Z M476.29 955.90h4.20V999.00h-4.20Z M482.29 955.90h4.20V999.00h-4.20Z M488.30 955.90h4.20V999.00h-4.20Z M494.31 955.90h4.20V999.00h-4.20Z M500.31 955.90h4.20V999.00h-4.20Z M506.32 955.90h4.20V999.00h-4.20Z M512.33 955.90h4.20V999.00h-4.20Z M518.33 955.90h4.20V999.00h-4.20Z M524.34 955.90h4.20V999.00h-4.20Z M530.34 955.90h4.20V999.00h-4.20Z M536.35 955.90h4.20V999.00h-4.20Z M542.36 955.90h4.20V999.00h-4.20Z M548.36 955.90h4.20V999.00h-4.20Z M554.37 955.90h4.20V999.00h-4.20Z M560.38 955.90h4.20V999.00h-4.20Z M566.38 947.20h4.20V999.00h-4.20Z M572.39 964.50h4.20V999.00h-4.20Z M578.39 955.90h4.20V999.00h-4.20Z" fill="#216b2e"/>
<text x="91.60" y="951.10" font-size="11" fill="#4e5254" text-anchor="end">1</text>
<text x="91.60" y="1002.90" font-size="11" fill="#4e5254" text-anchor="end">0</text>
<text x="106.00" y="1022.80" font-size="12" fill="#4e5254" text-anchor="middle">07:02 pm</text>
<text x="200.90" y="1022.80" font-size="12" fill="#4e5254" text-anchor="middle">07:06 pm</text>
<text x="295.80" y="1022.80" font-size="12" fill="#4e5254" text-anchor="middle">07:10 pm</text>
<text x="390.70" y="1022.80" font-size="12" fill="#4e5254" text-anchor="middle">07:14 pm</text>
<text x="485.60" y="1022.80" font-size="12" fill="#4e5254" text-anchor="middle">07:18 pm</text>
<text x="580.50" y="1022.80" font-size="12" fill="#4e5254" text-anchor="middle">07:22 pm</text>
<rect x="641.80" y="394.00" width="582.80" height="667.70" rx="12" fill="#191919"/>
<text x="651.14" y="422.00" font-size="16" fill="#f8f8f8" font-weight="normal" textLength="181.76" lengthAdjust="spacingAndGlyphs" stroke="#f8f8f8" stroke-width="0.2">Process Memory Usage</text>
<text x="651.14" y="459.90" font-size="12" fill="#606060" font-weight="normal" textLength="38.65" lengthAdjust="spacingAndGlyphs">go2rtc</text>
<text x="692.95" y="459.90" font-size="12" fill="#ececec" font-weight="normal" textLength="29.39" lengthAdjust="spacingAndGlyphs" stroke="#ececec" stroke-width="0.15">0.3%</text>
<path d="M694.70 494.00h4.20V546.00h-4.20Z M700.71 494.00h4.20V546.00h-4.20Z M706.71 494.00h4.20V546.00h-4.20Z M712.72 494.00h4.20V546.00h-4.20Z M718.73 494.00h4.20V546.00h-4.20Z M724.73 494.00h4.20V546.00h-4.20Z M730.74 494.00h4.20V546.00h-4.20Z M736.74 494.00h4.20V546.00h-4.20Z M742.75 494.00h4.20V546.00h-4.20Z M748.76 494.00h4.20V546.00h-4.20Z M754.76 494.00h4.20V546.00h-4.20Z M760.77 494.00h4.20V546.00h-4.20Z M766.78 494.00h4.20V546.00h-4.20Z M772.78 494.00h4.20V546.00h-4.20Z M778.79 494.00h4.20V546.00h-4.20Z M784.79 494.00h4.20V546.00h-4.20Z M790.80 494.00h4.20V546.00h-4.20Z M796.81 494.00h4.20V546.00h-4.20Z M802.81 494.00h4.20V546.00h-4.20Z M808.82 494.00h4.20V546.00h-4.20Z M814.83 494.00h4.20V546.00h-4.20Z M820.83 494.00h4.20V546.00h-4.20Z M826.84 494.00h4.20V546.00h-4.20Z M832.84 494.00h4.20V546.00h-4.20Z M838.85 494.00h4.20V546.00h-4.20Z M844.86 494.00h4.20V546.00h-4.20Z M850.86 494.00h4.20V546.00h-4.20Z M856.87 494.00h4.20V546.00h-4.20Z M862.88 494.00h4.20V546.00h-4.20Z M868.88 494.00h4.20V546.00h-4.20Z M874.89 494.00h4.20V546.00h-4.20Z M880.89 494.00h4.20V546.00h-4.20Z M886.90 494.00h4.20V546.00h-4.20Z M892.91 494.00h4.20V546.00h-4.20Z M898.91 494.00h4.20V546.00h-4.20Z M904.92 494.00h4.20V546.00h-4.20Z M910.93 494.00h4.20V546.00h-4.20Z M916.93 494.00h4.20V546.00h-4.20Z M922.94 494.00h4.20V546.00h-4.20Z M928.94 494.00h4.20V546.00h-4.20Z M934.95 494.00h4.20V546.00h-4.20Z M940.96 494.00h4.20V546.00h-4.20Z M946.96 494.00h4.20V546.00h-4.20Z M952.97 494.00h4.20V546.00h-4.20Z M958.98 494.00h4.20V546.00h-4.20Z M964.98 494.00h4.20V546.00h-4.20Z M970.99 494.00h4.20V546.00h-4.20Z M976.99 494.00h4.20V546.00h-4.20Z M983.00 494.00h4.20V546.00h-4.20Z M989.01 494.00h4.20V546.00h-4.20Z M995.01 494.00h4.20V546.00h-4.20Z M1001.02 494.00h4.20V546.00h-4.20Z M1007.03 494.00h4.20V546.00h-4.20Z M1013.03 494.00h4.20V546.00h-4.20Z M1019.04 494.00h4.20V546.00h-4.20Z M1025.04 494.00h4.20V546.00h-4.20Z M1031.05 494.00h4.20V546.00h-4.20Z M1037.06 494.00h4.20V546.00h-4.20Z M1043.06 494.00h4.20V546.00h-4.20Z M1049.07 494.00h4.20V546.00h-4.20Z M1055.08 494.00h4.20V546.00h-4.20Z M1061.08 494.00h4.20V546.00h-4.20Z M1067.09 494.00h4.20V546.00h-4.20Z M1073.09 494.00h4.20V546.00h-4.20Z M1079.10 494.00h4.20V546.00h-4.20Z M1085.11 494.00h4.20V546.00h-4.20Z M1091.11 494.00h4.20V546.00h-4.20Z M1097.12 494.00h4.20V546.00h-4.20Z M1103.13 494.00h4.20V546.00h-4.20Z M1109.13 494.00h4.20V546.00h-4.20Z M1115.14 494.00h4.20V546.00h-4.20Z M1121.14 494.00h4.20V546.00h-4.20Z M1127.15 494.00h4.20V546.00h-4.20Z M1133.16 494.00h4.20V546.00h-4.20Z M1139.16 494.00h4.20V546.00h-4.20Z M1145.17 494.00h4.20V546.00h-4.20Z M1151.18 494.00h4.20V546.00h-4.20Z M1157.18 494.00h4.20V546.00h-4.20Z M1163.19 494.00h4.20V546.00h-4.20Z M1169.19 494.00h4.20V546.00h-4.20Z" fill="#216b2e"/>
<text x="682.40" y="498.10" font-size="11" fill="#4e5254" text-anchor="end">1</text>
<text x="682.40" y="549.90" font-size="11" fill="#4e5254" text-anchor="end">0</text>
<text x="696.80" y="569.80" font-size="12" fill="#4e5254" text-anchor="middle">07:02 pm</text>
<text x="791.70" y="569.80" font-size="12" fill="#4e5254" text-anchor="middle">07:06 pm</text>
<text x="886.60" y="569.80" font-size="12" fill="#4e5254" text-anchor="middle">07:10 pm</text>
<text x="981.50" y="569.80" font-size="12" fill="#4e5254" text-anchor="middle">07:14 pm</text>
<text x="1076.40" y="569.80" font-size="12" fill="#4e5254" text-anchor="middle">07:18 pm</text>
<text x="1171.30" y="569.80" font-size="12" fill="#4e5254" text-anchor="middle">07:22 pm</text>
<text x="651.16" y="610.90" font-size="12" fill="#606060" font-weight="normal" textLength="36.66" lengthAdjust="spacingAndGlyphs">logger</text>
<text x="691.68" y="610.90" font-size="12" fill="#ececec" font-weight="normal" textLength="27.73" lengthAdjust="spacingAndGlyphs" stroke="#ececec" stroke-width="0.15">1.5%</text>
<path d="M694.70 648.60h4.20V697.00h-4.20Z M700.71 648.60h4.20V697.00h-4.20Z M706.71 648.60h4.20V697.00h-4.20Z M712.72 648.60h4.20V697.00h-4.20Z M718.73 648.60h4.20V697.00h-4.20Z M724.73 648.60h4.20V697.00h-4.20Z M730.74 648.60h4.20V697.00h-4.20Z M736.74 648.60h4.20V697.00h-4.20Z M742.75 648.60h4.20V697.00h-4.20Z M748.76 648.60h4.20V697.00h-4.20Z M754.76 648.60h4.20V697.00h-4.20Z M760.77 648.60h4.20V697.00h-4.20Z M766.78 648.60h4.20V697.00h-4.20Z M772.78 648.60h4.20V697.00h-4.20Z M778.79 648.60h4.20V697.00h-4.20Z M784.79 648.60h4.20V697.00h-4.20Z M790.80 648.60h4.20V697.00h-4.20Z M796.81 648.60h4.20V697.00h-4.20Z M802.81 648.60h4.20V697.00h-4.20Z M808.82 648.60h4.20V697.00h-4.20Z M814.83 648.60h4.20V697.00h-4.20Z M820.83 648.60h4.20V697.00h-4.20Z M826.84 648.60h4.20V697.00h-4.20Z M832.84 648.60h4.20V697.00h-4.20Z M838.85 648.60h4.20V697.00h-4.20Z M844.86 648.60h4.20V697.00h-4.20Z M850.86 648.60h4.20V697.00h-4.20Z M856.87 648.60h4.20V697.00h-4.20Z M862.88 648.60h4.20V697.00h-4.20Z M868.88 648.60h4.20V697.00h-4.20Z M874.89 648.60h4.20V697.00h-4.20Z M880.89 648.60h4.20V697.00h-4.20Z M886.90 648.60h4.20V697.00h-4.20Z M892.91 648.60h4.20V697.00h-4.20Z M898.91 648.60h4.20V697.00h-4.20Z M904.92 648.60h4.20V697.00h-4.20Z M910.93 648.60h4.20V697.00h-4.20Z M916.93 648.60h4.20V697.00h-4.20Z M922.94 648.60h4.20V697.00h-4.20Z M928.94 648.60h4.20V697.00h-4.20Z M934.95 648.60h4.20V697.00h-4.20Z M940.96 648.60h4.20V697.00h-4.20Z M946.96 648.60h4.20V697.00h-4.20Z M952.97 648.60h4.20V697.00h-4.20Z M958.98 648.60h4.20V697.00h-4.20Z M964.98 648.60h4.20V697.00h-4.20Z M970.99 648.60h4.20V697.00h-4.20Z M976.99 648.60h4.20V697.00h-4.20Z M983.00 648.60h4.20V697.00h-4.20Z M989.01 648.60h4.20V697.00h-4.20Z M995.01 648.60h4.20V697.00h-4.20Z M1001.02 648.60h4.20V697.00h-4.20Z M1007.03 648.60h4.20V697.00h-4.20Z M1013.03 648.60h4.20V697.00h-4.20Z M1019.04 648.60h4.20V697.00h-4.20Z M1025.04 648.60h4.20V697.00h-4.20Z M1031.05 648.60h4.20V697.00h-4.20Z M1037.06 648.60h4.20V697.00h-4.20Z M1043.06 648.60h4.20V697.00h-4.20Z M1049.07 648.60h4.20V697.00h-4.20Z M1055.08 648.60h4.20V697.00h-4.20Z M1061.08 648.60h4.20V697.00h-4.20Z M1067.09 648.60h4.20V697.00h-4.20Z M1073.09 648.60h4.20V697.00h-4.20Z M1079.10 648.60h4.20V697.00h-4.20Z M1085.11 648.60h4.20V697.00h-4.20Z M1091.11 648.60h4.20V697.00h-4.20Z M1097.12 648.60h4.20V697.00h-4.20Z M1103.13 648.60h4.20V697.00h-4.20Z M1109.13 648.60h4.20V697.00h-4.20Z M1115.14 648.60h4.20V697.00h-4.20Z M1121.14 648.60h4.20V697.00h-4.20Z M1127.15 648.60h4.20V697.00h-4.20Z M1133.16 648.60h4.20V697.00h-4.20Z M1139.16 648.60h4.20V697.00h-4.20Z M1145.17 648.60h4.20V697.00h-4.20Z M1151.18 648.60h4.20V697.00h-4.20Z M1157.18 648.60h4.20V697.00h-4.20Z M1163.19 648.60h4.20V697.00h-4.20Z M1169.19 648.60h4.20V697.00h-4.20Z" fill="#216b2e"/>
<text x="682.40" y="649.10" font-size="11" fill="#4e5254" text-anchor="end">2</text>
<text x="682.40" y="700.90" font-size="11" fill="#4e5254" text-anchor="end">0</text>
<text x="696.80" y="720.80" font-size="12" fill="#4e5254" text-anchor="middle">07:02 pm</text>
<text x="791.70" y="720.80" font-size="12" fill="#4e5254" text-anchor="middle">07:06 pm</text>
<text x="886.60" y="720.80" font-size="12" fill="#4e5254" text-anchor="middle">07:10 pm</text>
<text x="981.50" y="720.80" font-size="12" fill="#4e5254" text-anchor="middle">07:14 pm</text>
<text x="1076.40" y="720.80" font-size="12" fill="#4e5254" text-anchor="middle">07:18 pm</text>
<text x="1171.30" y="720.80" font-size="12" fill="#4e5254" text-anchor="middle">07:22 pm</text>
<text x="651.23" y="761.90" font-size="12" fill="#606060" font-weight="normal" textLength="55.05" lengthAdjust="spacingAndGlyphs">recording</text>
<text x="709.61" y="761.90" font-size="12" fill="#ececec" font-weight="normal" textLength="26.20" lengthAdjust="spacingAndGlyphs" stroke="#ececec" stroke-width="0.15">2.1%</text>
<path d="M694.70 804.00h4.20V848.00h-4.20Z M700.71 804.00h4.20V848.00h-4.20Z M706.71 804.00h4.20V848.00h-4.20Z M712.72 804.00h4.20V848.00h-4.20Z M718.73 804.00h4.20V848.00h-4.20Z M724.73 804.00h4.20V848.00h-4.20Z M730.74 804.00h4.20V848.00h-4.20Z M736.74 804.00h4.20V848.00h-4.20Z M742.75 804.00h4.20V848.00h-4.20Z M748.76 804.00h4.20V848.00h-4.20Z M754.76 804.00h4.20V848.00h-4.20Z M760.77 804.00h4.20V848.00h-4.20Z M766.78 804.00h4.20V848.00h-4.20Z M772.78 804.00h4.20V848.00h-4.20Z M778.79 804.00h4.20V848.00h-4.20Z M784.79 804.00h4.20V848.00h-4.20Z M790.80 804.00h4.20V848.00h-4.20Z M796.81 804.00h4.20V848.00h-4.20Z M802.81 804.00h4.20V848.00h-4.20Z M808.82 804.00h4.20V848.00h-4.20Z M814.83 804.00h4.20V848.00h-4.20Z M820.83 804.00h4.20V848.00h-4.20Z M826.84 804.00h4.20V848.00h-4.20Z M832.84 804.00h4.20V848.00h-4.20Z M838.85 804.00h4.20V848.00h-4.20Z M844.86 804.00h4.20V848.00h-4.20Z M850.86 804.00h4.20V848.00h-4.20Z M856.87 804.00h4.20V848.00h-4.20Z M862.88 804.00h4.20V848.00h-4.20Z M868.88 804.00h4.20V848.00h-4.20Z M874.89 804.00h4.20V848.00h-4.20Z M880.89 804.00h4.20V848.00h-4.20Z M886.90 804.00h4.20V848.00h-4.20Z M892.91 804.00h4.20V848.00h-4.20Z M898.91 804.00h4.20V848.00h-4.20Z M904.92 804.00h4.20V848.00h-4.20Z M910.93 804.00h4.20V848.00h-4.20Z M916.93 804.00h4.20V848.00h-4.20Z M922.94 804.00h4.20V848.00h-4.20Z M928.94 804.00h4.20V848.00h-4.20Z M934.95 804.00h4.20V848.00h-4.20Z M940.96 804.00h4.20V848.00h-4.20Z M946.96 804.00h4.20V848.00h-4.20Z M952.97 804.00h4.20V848.00h-4.20Z M958.98 804.00h4.20V848.00h-4.20Z M964.98 804.00h4.20V848.00h-4.20Z M970.99 804.00h4.20V848.00h-4.20Z M976.99 804.00h4.20V848.00h-4.20Z M983.00 804.00h4.20V848.00h-4.20Z M989.01 804.00h4.20V848.00h-4.20Z M995.01 804.00h4.20V848.00h-4.20Z M1001.02 804.00h4.20V848.00h-4.20Z M1007.03 804.00h4.20V848.00h-4.20Z M1013.03 804.00h4.20V848.00h-4.20Z M1019.04 804.00h4.20V848.00h-4.20Z M1025.04 804.00h4.20V848.00h-4.20Z M1031.05 804.00h4.20V848.00h-4.20Z M1037.06 804.00h4.20V848.00h-4.20Z M1043.06 804.00h4.20V848.00h-4.20Z M1049.07 804.00h4.20V848.00h-4.20Z M1055.08 804.00h4.20V848.00h-4.20Z M1061.08 804.00h4.20V848.00h-4.20Z M1067.09 804.00h4.20V848.00h-4.20Z M1073.09 804.00h4.20V848.00h-4.20Z M1079.10 804.00h4.20V848.00h-4.20Z M1085.11 804.00h4.20V848.00h-4.20Z M1091.11 804.00h4.20V848.00h-4.20Z M1097.12 804.00h4.20V848.00h-4.20Z M1103.13 804.00h4.20V848.00h-4.20Z M1109.13 804.00h4.20V848.00h-4.20Z M1115.14 804.00h4.20V848.00h-4.20Z M1121.14 804.00h4.20V848.00h-4.20Z M1127.15 804.00h4.20V848.00h-4.20Z M1133.16 804.00h4.20V848.00h-4.20Z M1139.16 804.00h4.20V848.00h-4.20Z M1145.17 804.00h4.20V848.00h-4.20Z M1151.18 804.00h4.20V848.00h-4.20Z M1157.18 804.00h4.20V848.00h-4.20Z M1163.19 804.00h4.20V848.00h-4.20Z M1169.19 804.00h4.20V848.00h-4.20Z" fill="#216b2e"/>
<text x="682.40" y="800.10" font-size="11" fill="#4e5254" text-anchor="end">3</text>
<text x="682.40" y="851.90" font-size="11" fill="#4e5254" text-anchor="end">0</text>
<text x="696.80" y="871.80" font-size="12" fill="#4e5254" text-anchor="middle">07:02 pm</text>
<text x="791.70" y="871.80" font-size="12" fill="#4e5254" text-anchor="middle">07:06 pm</text>
<text x="886.60" y="871.80" font-size="12" fill="#4e5254" text-anchor="middle">07:10 pm</text>
<text x="981.50" y="871.80" font-size="12" fill="#4e5254" text-anchor="middle">07:14 pm</text>
<text x="1076.40" y="871.80" font-size="12" fill="#4e5254" text-anchor="middle">07:18 pm</text>
<text x="1171.30" y="871.80" font-size="12" fill="#4e5254" text-anchor="middle">07:22 pm</text>
<text x="651.25" y="912.90" font-size="12" fill="#606060" font-weight="normal" textLength="90.61" lengthAdjust="spacingAndGlyphs">review segment</text>
<text x="745.25" y="912.90" font-size="12" fill="#ececec" font-weight="normal" textLength="27.67" lengthAdjust="spacingAndGlyphs" stroke="#ececec" stroke-width="0.15">1.8%</text>
<path d="M694.70 951.70h4.20V999.00h-4.20Z M700.71 951.70h4.20V999.00h-4.20Z M706.71 951.70h4.20V999.00h-4.20Z M712.72 951.70h4.20V999.00h-4.20Z M718.73 951.70h4.20V999.00h-4.20Z M724.73 951.70h4.20V999.00h-4.20Z M730.74 951.70h4.20V999.00h-4.20Z M736.74 951.70h4.20V999.00h-4.20Z M742.75 951.70h4.20V999.00h-4.20Z M748.76 951.70h4.20V999.00h-4.20Z M754.76 951.70h4.20V999.00h-4.20Z M760.77 951.70h4.20V999.00h-4.20Z M766.78 951.70h4.20V999.00h-4.20Z M772.78 951.70h4.20V999.00h-4.20Z M778.79 951.70h4.20V999.00h-4.20Z M784.79 951.70h4.20V999.00h-4.20Z M790.80 951.70h4.20V999.00h-4.20Z M796.81 951.70h4.20V999.00h-4.20Z M802.81 951.70h4.20V999.00h-4.20Z M808.82 951.70h4.20V999.00h-4.20Z M814.83 951.70h4.20V999.00h-4.20Z M820.83 951.70h4.20V999.00h-4.20Z M826.84 951.70h4.20V999.00h-4.20Z M832.84 951.70h4.20V999.00h-4.20Z M838.85 951.70h4.20V999.00h-4.20Z M844.86 951.70h4.20V999.00h-4.20Z M850.86 951.70h4.20V999.00h-4.20Z M856.87 951.70h4.20V999.00h-4.20Z M862.88 951.70h4.20V999.00h-4.20Z M868.88 951.70h4.20V999.00h-4.20Z M874.89 951.70h4.20V999.00h-4.20Z M880.89 951.70h4.20V999.00h-4.20Z M886.90 951.70h4.20V999.00h-4.20Z M892.91 951.70h4.20V999.00h-4.20Z M898.91 951.70h4.20V999.00h-4.20Z M904.92 951.70h4.20V999.00h-4.20Z M910.93 951.70h4.20V999.00h-4.20Z M916.93 951.70h4.20V999.00h-4.20Z M922.94 951.70h4.20V999.00h-4.20Z M928.94 951.70h4.20V999.00h-4.20Z M934.95 951.70h4.20V999.00h-4.20Z M940.96 951.70h4.20V999.00h-4.20Z M946.96 951.70h4.20V999.00h-4.20Z M952.97 951.70h4.20V999.00h-4.20Z M958.98 951.70h4.20V999.00h-4.20Z M964.98 951.70h4.20V999.00h-4.20Z M970.99 951.70h4.20V999.00h-4.20Z M976.99 951.70h4.20V999.00h-4.20Z M983.00 951.70h4.20V999.00h-4.20Z M989.01 951.70h4.20V999.00h-4.20Z M995.01 951.70h4.20V999.00h-4.20Z M1001.02 951.70h4.20V999.00h-4.20Z M1007.03 951.70h4.20V999.00h-4.20Z M1013.03 951.70h4.20V999.00h-4.20Z M1019.04 951.70h4.20V999.00h-4.20Z M1025.04 951.70h4.20V999.00h-4.20Z M1031.05 951.70h4.20V999.00h-4.20Z M1037.06 951.70h4.20V999.00h-4.20Z M1043.06 951.70h4.20V999.00h-4.20Z M1049.07 951.70h4.20V999.00h-4.20Z M1055.08 951.70h4.20V999.00h-4.20Z M1061.08 951.70h4.20V999.00h-4.20Z M1067.09 951.70h4.20V999.00h-4.20Z M1073.09 951.70h4.20V999.00h-4.20Z M1079.10 951.70h4.20V999.00h-4.20Z M1085.11 951.70h4.20V999.00h-4.20Z M1091.11 951.70h4.20V999.00h-4.20Z M1097.12 951.70h4.20V999.00h-4.20Z M1103.13 951.70h4.20V999.00h-4.20Z M1109.13 951.70h4.20V999.00h-4.20Z M1115.14 951.70h4.20V999.00h-4.20Z M1121.14 951.70h4.20V999.00h-4.20Z M1127.15 951.70h4.20V999.00h-4.20Z M1133.16 951.70h4.20V999.00h-4.20Z M1139.16 951.70h4.20V999.00h-4.20Z M1145.17 951.70h4.20V999.00h-4.20Z M1151.18 951.70h4.20V999.00h-4.20Z M1157.18 951.70h4.20V999.00h-4.20Z M1163.19 951.70h4.20V999.00h-4.20Z M1169.19 951.70h4.20V999.00h-4.20Z" fill="#216b2e"/>
<text x="682.40" y="951.10" font-size="11" fill="#4e5254" text-anchor="end">2</text>
<text x="682.40" y="1002.90" font-size="11" fill="#4e5254" text-anchor="end">0</text>
<text x="696.80" y="1022.80" font-size="12" fill="#4e5254" text-anchor="middle">07:02 pm</text>
<text x="791.70" y="1022.80" font-size="12" fill="#4e5254" text-anchor="middle">07:06 pm</text>
<text x="886.60" y="1022.80" font-size="12" fill="#4e5254" text-anchor="middle">07:10 pm</text>
<text x="981.50" y="1022.80" font-size="12" fill="#4e5254" text-anchor="middle">07:14 pm</text>
<text x="1076.40" y="1022.80" font-size="12" fill="#4e5254" text-anchor="middle">07:18 pm</text>
<text x="1171.30" y="1022.80" font-size="12" fill="#4e5254" text-anchor="middle">07:22 pm</text>
</svg></body></html>
